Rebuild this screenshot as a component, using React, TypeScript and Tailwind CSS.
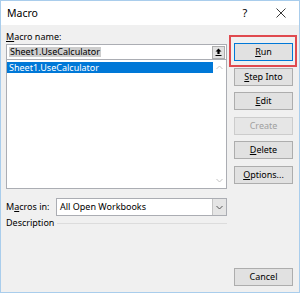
import type { ReactNode } from "react";

function Btn({
  children,
  primary,
  disabled,
}: {
  children: ReactNode;
  primary?: boolean;
  disabled?: boolean;
}) {
  const look = primary
    ? "border-[#0078d7] bg-[#e1e1e1] text-black"
    : disabled
      ? "border-[#cccccc] bg-[#e6e6e6] text-[#a0a0a0]"
      : "border-[#adadad] bg-[#e1e1e1] text-black";
  return (
    <div className={`h-[18px] flex items-center justify-center border ${look}`}>
      {children}
    </div>
  );
}

function Chevron({ up }: { up?: boolean }) {
  return (
    <svg width="7" height="5" viewBox="0 0 7 5">
      <path
        d={up ? "M0.5 4 L3.5 1 L6.5 4" : "M0.5 1 L3.5 4 L6.5 1"}
        fill="none"
        stroke="currentColor"
        strokeWidth="1"
      />
    </svg>
  );
}

export default function App() {
  return (
    <div className="relative w-[300px] h-[293px] flex flex-col bg-[#f0f0f0] border border-[#a9cdec] font-['Noto_Sans',sans-serif] text-[9px] leading-[12px] text-black">
      {/* title bar */}
      <div className="h-[24px] bg-white flex items-center pl-[6px] shrink-0">
        <span className="text-[10.5px]">Macro</span>
        <span className="ml-auto w-[10px] text-center text-[11px] mr-[26px]">?</span>
        <svg width="10" height="10" viewBox="0 0 10 10" className="mr-[13px]">
          <path d="M0.5 0.5 L9.5 9.5 M9.5 0.5 L0.5 9.5" stroke="#222" strokeWidth="0.9" />
        </svg>
      </div>

      <div className="flex-1 flex px-[5px]">
        {/* left column */}
        <div className="w-[221px] flex flex-col pt-[6px]">
          <div>
            <span className="underline">M</span>acro name:
          </div>
          <div className="mt-[1px] h-[16px] bg-white border border-[#abadb3] flex items-center pl-[2px] pr-[1px]">
            <span className="bg-[#cdcdcd] px-[1px] leading-[10px]">Sheet1.UseCalculator</span>
            <div className="ml-auto w-[13px] h-[13px] bg-[#e1e1e1] border border-[#adadad] flex items-center justify-center">
              <svg width="7" height="8" viewBox="0 0 7 8">
                <path d="M3.5 0.5 L6.5 3.5 L4.6 3.5 L4.6 6 L2.4 6 L2.4 3.5 L0.5 3.5 Z" fill="#000" />
                <rect x="0.5" y="7" width="6" height="1" fill="#000" />
              </svg>
            </div>
          </div>
          <div className="h-[129px] bg-white border border-[#abadb3] border-t-0 flex">
            <div className="flex-1 pt-[2px]">
              <div className="h-[11px] bg-[#0078d7] text-white flex items-center pl-[2px]">
                Sheet1.UseCalculator
              </div>
            </div>
            <div className="w-[13px] flex flex-col items-center justify-between py-[5px] text-[#c2c2c2]">
              <Chevron up />
              <Chevron />
            </div>
          </div>

          <div className="mt-[9px] h-[18px] flex items-center">
            <span className="w-[50px]">
              M<span className="underline">a</span>cros in:
            </span>
            <div className="flex-1 h-full bg-white border border-[#abadb3] flex items-center pl-[3px]">
              <span>All Open Workbooks</span>
              <div className="ml-auto w-[14px] h-full bg-[#e5e5e5] border-l border-[#c4c4c4] flex items-center justify-center text-[#555]">
                <Chevron />
              </div>
            </div>
          </div>
          <div className="mt-[1px] flex items-center">
            <span>Description</span>
            <div className="flex-1 ml-[3px] h-px bg-[#dcdcdc]" />
          </div>
        </div>

        {/* right column */}
        <div className="ml-[7px] w-[59px] flex flex-col pt-[18px] pb-[6px]">
          <div className="flex flex-col gap-[6.5px]">
            <Btn primary>
              <span className="underline">R</span>un
            </Btn>
            <Btn>
              <span className="underline">S</span>tep Into
            </Btn>
            <Btn>
              <span className="underline">E</span>dit
            </Btn>
            <Btn disabled>Create</Btn>
            <Btn>
              <span className="underline">D</span>elete
            </Btn>
            <Btn>
              <span className="underline">O</span>ptions...
            </Btn>
          </div>
          <div className="mt-auto">
            <Btn>Cancel</Btn>
          </div>
        </div>
      </div>

      {/* red highlight drawn around Run */}
      <div className="absolute left-[228px] top-[34px] w-[68px] h-[32px] border-[2.5px] border-[#e04a4f]" />
    </div>
  );
}
